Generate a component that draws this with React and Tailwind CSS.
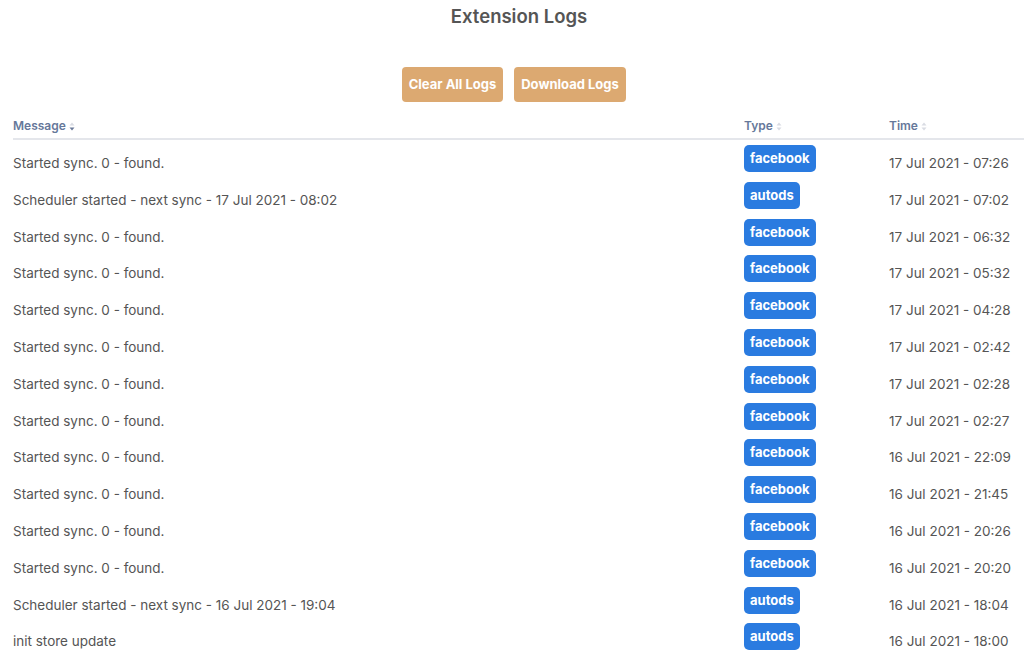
import React from 'react';

const logs = [
  { message: 'Started sync. 0 - found.', type: 'facebook', time: '17 Jul 2021 - 07:26' },
  { message: 'Scheduler started - next sync - 17 Jul 2021 - 08:02', type: 'autods', time: '17 Jul 2021 - 07:02' },
  { message: 'Started sync. 0 - found.', type: 'facebook', time: '17 Jul 2021 - 06:32' },
  { message: 'Started sync. 0 - found.', type: 'facebook', time: '17 Jul 2021 - 05:32' },
  { message: 'Started sync. 0 - found.', type: 'facebook', time: '17 Jul 2021 - 04:28' },
  { message: 'Started sync. 0 - found.', type: 'facebook', time: '17 Jul 2021 - 02:42' },
  { message: 'Started sync. 0 - found.', type: 'facebook', time: '17 Jul 2021 - 02:28' },
  { message: 'Started sync. 0 - found.', type: 'facebook', time: '17 Jul 2021 - 02:27' },
  { message: 'Started sync. 0 - found.', type: 'facebook', time: '16 Jul 2021 - 22:09' },
  { message: 'Started sync. 0 - found.', type: 'facebook', time: '16 Jul 2021 - 21:45' },
  { message: 'Started sync. 0 - found.', type: 'facebook', time: '16 Jul 2021 - 20:26' },
  { message: 'Started sync. 0 - found.', type: 'facebook', time: '16 Jul 2021 - 20:20' },
  { message: 'Scheduler started - next sync - 16 Jul 2021 - 19:04', type: 'autods', time: '16 Jul 2021 - 18:04' },
  { message: 'init store update', type: 'autods', time: '16 Jul 2021 - 18:00' },
];

function SortIcon({ active }) {
  return (
    <svg width="6" height="9" viewBox="0 0 6 9" className="ml-[3px] mt-[4px]">
      <path d="M3 0.5 L5.5 3.5 L0.5 3.5 Z" fill="#d9dce3" />
      <path d="M3 8.5 L5.5 5.5 L0.5 5.5 Z" fill={active ? '#6b7a99' : '#d9dce3'} />
    </svg>
  );
}

export default function App() {
  return (
    <div className="w-[1024px] h-[656px] overflow-hidden bg-white" style={{ fontFamily: 'Inter, "Liberation Sans", sans-serif' }}>
      {/* Title */}
      <h1 className="pt-[4px] pl-[14px] text-center text-[18.5px] leading-[25px] font-semibold text-[#555555]">Extension Logs</h1>

      {/* Actions */}
      <div className="mt-[38px] flex justify-center gap-[11px] pl-[4px]">
        <button className="w-[101px] h-[35px] rounded-[4px] bg-[#dca971] text-white text-[13px] font-bold">Clear All Logs</button>
        <button className="w-[112px] h-[35px] rounded-[4px] bg-[#dca971] text-white text-[13px] font-bold">Download Logs</button>
      </div>

      {/* Table */}
      <div className="mt-[16px] pl-[13px]">
        <div className="flex h-[22px] border-b-2 border-[#e4e6eb] text-[12px] leading-[16px] font-semibold text-[#66789a]">
          <div className="w-[731px] flex items-start">Message<SortIcon active /></div>
          <div className="w-[145px] flex items-start">Type<SortIcon /></div>
          <div className="flex items-start">Time<SortIcon /></div>
        </div>
        {logs.map((log, i) => (
          <div key={i} className="flex h-[36.8px] text-[13.5px] leading-[20px] text-[#555555]">
            <div className="w-[731px] pt-[13px]">{log.message}</div>
            <div className="w-[145px] pt-[5px]">
              <span className="inline-block h-[27px] px-[6px] rounded-[5px] bg-[#2a7be0] text-white text-[13px] font-bold leading-[27px]">{log.type}</span>
            </div>
            <div className="pt-[13px]">{log.time}</div>
          </div>
        ))}
      </div>
    </div>
  );
}
